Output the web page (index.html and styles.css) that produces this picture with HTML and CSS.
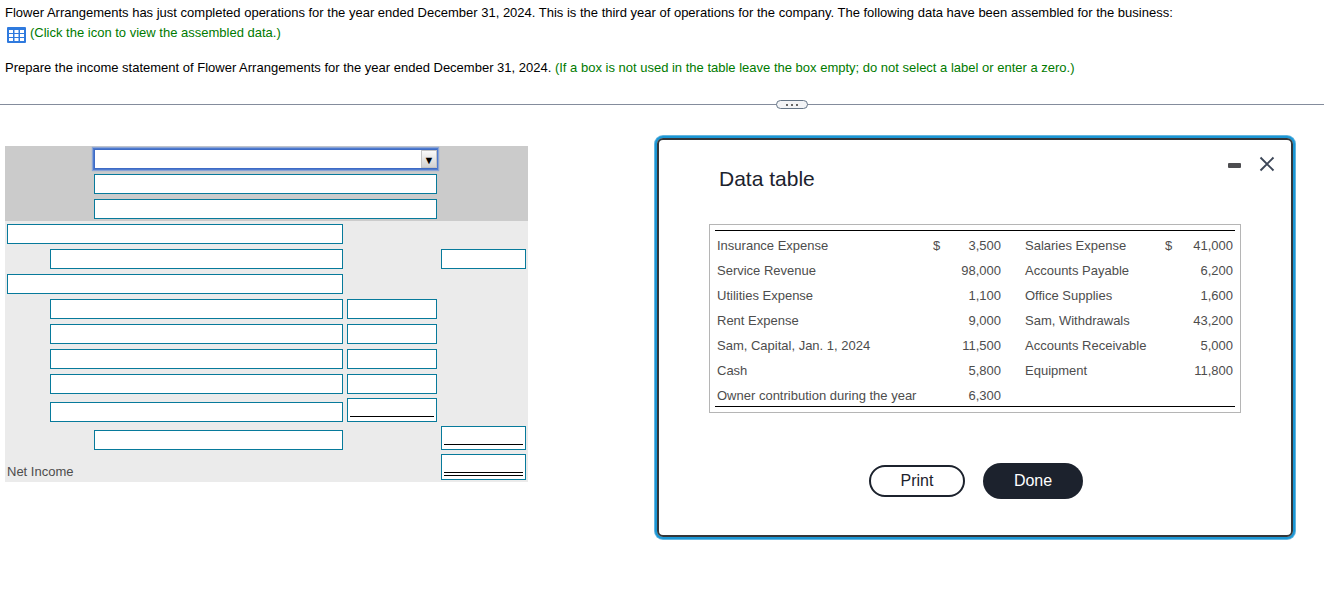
FILE: index.html
```html
<!DOCTYPE html>
<html lang="en">
<head>
<meta charset="utf-8">
<title>Flower Arrangements – Income Statement</title>
<link rel="stylesheet" href="styles.css">
</head>
<body>
<header class="question">
  <p>Flower Arrangements has just completed operations for the year ended December 31, 2024. This is the third year of operations for the company. The following data have been assembled for the business:</p>
  <p class="hint icon-line">
    <button class="grid-button" type="button" aria-label="View the assembled data">
      <svg width="19" height="16" viewBox="0 0 19 16"><rect width="19" height="16" rx="1" fill="#2f7ade"/><path fill="#fff" d="M2 3h4v3H2zM7.500 3h4v3h-4zM13 3h4v3h-4zM2 7h4v3H2zM7.500 7h4v3h-4zM13 7h4v3h-4zM2 11h4v3H2zM7.500 11h4v3h-4zM13 11h4v3h-4z"/></svg>
    </button>
    <span>(Click the icon to view the assembled data.)</span>
  </p>
  <p class="task">Prepare the income statement of Flower Arrangements for the year ended December 31, 2024. <span class="hint">(If a box is not used in the table leave the box empty; do not select a label or enter a zero.)</span></p>
</header>

<div class="splitter">
  <button class="splitter-handle" type="button" aria-label="Resize panels"><i></i><i></i><i></i></button>
</div>

<main class="workspace">
  <form class="sheet">
    <div class="sheet-head">
      <div class="row"><div class="combo heading"><select class="box" aria-label="Heading line 1"><option></option></select><span class="arrow" aria-hidden="true">▼</span></div></div>
      <div class="row"><input class="box heading" aria-label="Heading line 2"></div>
      <div class="row"><input class="box heading" aria-label="Heading line 3"></div>
    </div>
    <div class="row"><input class="box section" aria-label="Section 1"></div>
    <div class="row"><input class="box item" aria-label="Section 1 account"><input class="box total" aria-label="Section 1 amount"></div>
    <div class="row"><input class="box section" aria-label="Section 2"></div>
    <div class="row"><input class="box item" aria-label="Account 1"><input class="box amount" aria-label="Amount 1"></div>
    <div class="row"><input class="box item" aria-label="Account 2"><input class="box amount" aria-label="Amount 2"></div>
    <div class="row"><input class="box item" aria-label="Account 3"><input class="box amount" aria-label="Amount 3"></div>
    <div class="row"><input class="box item" aria-label="Account 4"><input class="box amount" aria-label="Amount 4"></div>
    <div class="row"><input class="box item" aria-label="Account 5"><div class="ruled amount"><input aria-label="Amount 5"></div></div>
    <div class="row"><input class="box subtotal" aria-label="Subtotal label"><div class="ruled total"><input aria-label="Subtotal amount"></div></div>
    <div class="row"><label class="section net" for="net">Net Income</label><div class="ruled double total"><input id="net"></div></div>
  </form>

  <section class="dialog" role="dialog" aria-labelledby="dialog-title">
    <div class="dialog-head">
      <h2 id="dialog-title">Data table</h2>
      <div class="window-buttons">
        <button type="button" aria-label="Minimize"><svg width="14" height="16" viewBox="0 0 14 16"><rect y="7" width="13" height="5" rx="1" fill="#4d4d50"/></svg></button>
        <button type="button" aria-label="Close"><svg width="16" height="16" viewBox="0 0 16 16"><path d="M1.500 1.500l13 13M14.500 1.500l-13 13" stroke="#3c4657" stroke-width="1.900" fill="none"/></svg></button>
      </div>
    </div>
    <div class="table-frame">
      <table>
        <colgroup><col class="c-name"><col class="c-sign"><col class="c-num"><col class="c-name2"><col class="c-sign"><col class="c-num"></colgroup>
        <tbody>
          <tr><td>Insurance Expense</td><td>$</td><td class="num">3,500</td><td class="second">Salaries Expense</td><td>$</td><td class="num">41,000</td></tr>
          <tr><td>Service Revenue</td><td></td><td class="num">98,000</td><td class="second">Accounts Payable</td><td></td><td class="num">6,200</td></tr>
          <tr><td>Utilities Expense</td><td></td><td class="num">1,100</td><td class="second">Office Supplies</td><td></td><td class="num">1,600</td></tr>
          <tr><td>Rent Expense</td><td></td><td class="num">9,000</td><td class="second">Sam, Withdrawals</td><td></td><td class="num">43,200</td></tr>
          <tr><td>Sam, Capital, Jan. 1, 2024</td><td></td><td class="num">11,500</td><td class="second">Accounts Receivable</td><td></td><td class="num">5,000</td></tr>
          <tr><td>Cash</td><td></td><td class="num">5,800</td><td class="second">Equipment</td><td></td><td class="num">11,800</td></tr>
          <tr><td>Owner contribution during the year</td><td></td><td class="num">6,300</td><td></td><td></td><td></td></tr>
        </tbody>
      </table>
    </div>
    <div class="actions">
      <button class="print" type="button">Print</button>
      <button class="done" type="button">Done</button>
    </div>
  </section>
</main>
</body>
</html>
```
FILE: styles.css
```css
* { box-sizing: border-box; }

body {
  margin: 0;
  background: #fff;
  color: #000;
  font: 13px/20px "Liberation Sans", Arial, sans-serif;
}

p, h2 { margin: 0; }

button {
  padding: 0;
  border: 0;
  background: none;
  font-family: inherit;
  cursor: pointer;
}

svg { display: block; }

/* Question text */
.question { padding: 3px 5px 0; }
.hint { color: #007a00; }
.icon-line { display: flex; gap: 4px; padding-left: 2px; }
.grid-button { padding-top: 3px; height: 20px; }
.task { margin-top: 15px; }

/* Divider with drag handle */
.splitter {
  display: flex;
  align-items: center;
  justify-content: center;
  height: 9px;
  margin-top: 22px;
  padding-left: 260px;
  background: linear-gradient(#848c9c, #848c9c) center / 100% 1px no-repeat;
}
.splitter-handle {
  display: flex;
  align-items: center;
  justify-content: center;
  gap: 3px;
  width: 32px;
  height: 9px;
  border: 1px solid #657587;
  border-radius: 5px;
  background: #f3f4f6;
}
.splitter-handle i { width: 2px; height: 2px; background: #666; }

.workspace {
  display: flex;
  align-items: flex-start;
  justify-content: space-between;
  gap: 24px;
  padding: 29px 31px 29px 5px;
}

/* Income statement form */
.sheet {
  flex: 0 1 523px;
  margin-top: 8px;
  background: #ebebeb;
}
.sheet-head { background: #cbcbcb; }
.row {
  display: grid;
  grid-template-columns: 39fr 40fr 249fr 90fr 85fr;
  column-gap: 4px;
  align-items: end;
  min-height: 25px;
  padding: 2px;
}
.heading { grid-column: 3 / 5; }
.section { grid-column: 1 / 4; }
.item { grid-column: 2 / 4; }
.subtotal { grid-column: 3; }
.amount { grid-column: 4; }
.total { grid-column: 5; }

.box, .ruled {
  width: 100%;
  min-width: 0;
  border: 1px solid #077a9b;
  border-radius: 0;
  background: #fff;
}
.box { display: block; height: 20px; padding: 0 4px; font: inherit; }
.ruled { padding: 0 2px 4px; }
.ruled input {
  display: block;
  width: 100%;
  height: 18px;
  padding: 0;
  border: 0;
  border-bottom: 1px solid #000;
  font: inherit;
  text-align: right;
}
.ruled.double { padding-bottom: 3px; }
.ruled.double input { height: 21px; border-bottom: 4px double #000; }
.net { color: #4d4d4d; line-height: 17px; }

.combo { position: relative; }
.combo .box {
  appearance: none;
  border-color: #3e6bc5;
  outline: 1px solid #4f7bce;
  box-shadow: 0 0 1px 2px #8aa4d6;
}
.arrow {
  position: absolute;
  top: 1px;
  right: 0;
  bottom: 1px;
  width: 16px;
  border: 1px solid #c4c4c4;
  background: linear-gradient(#fafafa, #d2d2d2);
  font-size: 11px;
  line-height: 18px;
  text-align: center;
  pointer-events: none;
}

/* Data table dialog */
.dialog {
  flex: 0 1 636px;
  border: 2px solid #333639;
  border-radius: 6px;
  box-shadow: 0 0 0 2px #1b97d5, 0 0 0 3px #64b5df;
  padding: 16px 50px 36px;
}
.dialog-head {
  display: flex;
  justify-content: space-between;
  margin: 0 -34px 0 10px;
  height: 68px;
}
.dialog-head h2 {
  padding-top: 9px;
  color: #1c222d;
  font-size: 21px;
  line-height: 28px;
  font-weight: 400;
}
.window-buttons { display: flex; align-items: flex-start; gap: 17px; }

.table-frame { border: 1px solid #b5b5b5; padding: 5px; }
table {
  width: 100%;
  table-layout: fixed;
  border-spacing: 0;
  border-top: 1px solid #000;
  border-bottom: 1px solid #000;
  color: #4d4d4d;
}
td { height: 25px; padding: 5px 2px 0; white-space: nowrap; }
.second { padding-left: 22px; }
.num { text-align: right; }
.c-sign { width: 20px; }
.c-num { width: 52px; }
.c-name2 { width: 160px; }

.actions {
  display: flex;
  align-items: center;
  justify-content: center;
  gap: 18px;
  margin-top: 50px;
  padding-left: 2px;
}
.print, .done { border-radius: 18px; font-size: 16px; line-height: 20px; }
.print { width: 96px; height: 32px; border: 2px solid #1c222d; color: #1c222d; }
.done { width: 100px; height: 36px; background: #1c222d; color: #fff; }
```
